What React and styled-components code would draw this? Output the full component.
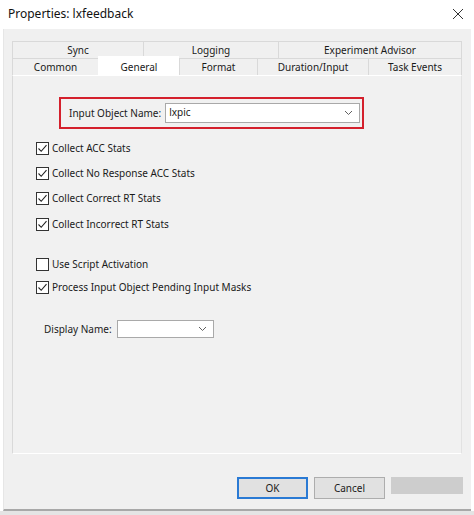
import React from 'react';
import styled, { createGlobalStyle } from 'styled-components';

const GlobalStyle = createGlobalStyle`
  html, body {
    margin: 0;
    padding: 0;
    background: #ffffff;
  }
  * {
    box-sizing: border-box;
  }
`;

const topTabs = ['Sync', 'Logging', 'Experiment Advisor'];
const topWidths = [131, 135, 184];
const bottomTabs = ['Common', 'General', 'Format', 'Duration/Input', 'Task Events'];
const bottomWidths = [86, 81, 78, 111, 94];

const checks = [
  { label: 'Collect ACC Stats', checked: true, gap: 12 },
  { label: 'Collect No Response ACC Stats', checked: true, gap: 11 },
  { label: 'Collect Correct RT Stats', checked: true, gap: 11 },
  { label: 'Collect Incorrect RT Stats', checked: true, gap: 12 },
  { label: 'Use Script Activation', checked: false, gap: 26 },
  { label: 'Process Input Object Pending Input Masks', checked: true, gap: 9 },
];

function Arrow() {
  return (
    <svg width="9" height="6" viewBox="0 0 9 6">
      <polyline points="1,1 4.5,4.5 8,1" fill="none" stroke="#606060" strokeWidth="1" />
    </svg>
  );
}

function CheckBox({ checked }) {
  return (
    <Box>
      {checked && (
        <svg width="11" height="11" viewBox="0 0 11 11">
          <polyline points="1.5,5.5 4.2,8.3 9.5,2.2" fill="none" stroke="#222" strokeWidth="1.1" />
        </svg>
      )}
    </Box>
  );
}

export default function App() {
  return (
    <Window>
      <GlobalStyle />
      <TitleBar>
        <Title>Properties: lxfeedback</Title>
        <Close>
          <svg width="12" height="12" viewBox="0 0 12 12">
            <path d="M1 1 L11 11 M11 1 L1 11" stroke="#333" strokeWidth="1" />
          </svg>
        </Close>
      </TitleBar>
      <Body>
        <Tabs>
          <TabRow>
            {topTabs.map((t, i) => (
              <Tab key={t} $w={topWidths[i]}>{t}</Tab>
            ))}
          </TabRow>
          <TabRow>
            {bottomTabs.map((t, i) => (
              <Tab key={t} $w={bottomWidths[i]} $active={t === 'General'}>{t}</Tab>
            ))}
          </TabRow>
        </Tabs>
        <Panel>
          <Highlight>
            <Label>Input Object Name:</Label>
            <Combo $grow $h={20}>
              <span>lxpic</span>
              <Arrow />
            </Combo>
          </Highlight>
          <CheckList>
            {checks.map((c) => (
              <CheckRow key={c.label} $gap={c.gap}>
                <CheckBox checked={c.checked} />
                <span>{c.label}</span>
              </CheckRow>
            ))}
          </CheckList>
          <DisplayRow>
            <Label>Display Name:</Label>
            <Combo $w={97} $h={18}>
              <span />
              <Arrow />
            </Combo>
          </DisplayRow>
        </Panel>
        <Buttons>
          <Button $focus>OK</Button>
          <Button>Cancel</Button>
          <Blur />
        </Buttons>
      </Body>
      <Footer />
    </Window>
  );
}

const Window = styled.div`
  width: 474px;
  height: 515px;
  display: flex;
  flex-direction: column;
  background: #ffffff;
  font-family: "Noto Sans", "Open Sans", sans-serif;
  color: #1a1a1a;
  overflow: hidden;
`;

const TitleBar = styled.div`
  height: 29px;
  flex-shrink: 0;
  display: flex;
  align-items: center;
  justify-content: space-between;
  padding: 0 10px 2px 8px;
`;

const Title = styled.div`
  font-size: 12px;
  color: #111;
`;

const Close = styled.div`
  display: flex;
  align-items: center;
`;

const Body = styled.div`
  flex: 1;
  margin: 0 3px;
  background: #f0f0f0;
  border-left: 1px solid #e6e6e6;
  border-bottom: 2px solid #a8a8a8;
  padding: 12px 0 0 8px;
  display: flex;
  flex-direction: column;
`;

const Tabs = styled.div`
  display: flex;
  flex-direction: column;
  width: 450px;
`;

const TabRow = styled.div`
  display: flex;
  height: 17px;
`;

const Tab = styled.div`
  width: ${(p) => p.$w}px;
  display: flex;
  align-items: center;
  justify-content: center;
  font-size: 10px;
  color: #1a1a1a;
  border: 1px solid #d9d9d9;
  border-right: none;
  border-bottom: none;
  background: ${(p) => (p.$active ? '#ffffff' : '#f0f0f0')};
  position: relative;
  ${(p) => p.$active && `
    margin-top: -2px;
    height: 20px;
    z-index: 1;
    border-color: #ffffff;
  `}
  &:last-child {
    border-right: 1px solid #d9d9d9;
  }
`;

const Panel = styled.div`
  width: 450px;
  height: 379px;
  border: 1px solid #d9d9d9;
  border-top-color: #ffffff;
  border-right-color: #e2e2e2;
  border-bottom-color: #ffffff;
  background: #f1f1f1;
  padding: 21px 0 0 23px;
  display: flex;
  flex-direction: column;
`;

const Highlight = styled.div`
  margin-left: 23px;
  width: 305px;
  height: 32px;
  flex-shrink: 0;
  border: 2px solid #d4202c;
  display: flex;
  align-items: center;
  padding: 0 2px 0 8px;
  gap: 4px;
`;

const Label = styled.span`
  font-size: 10px;
  color: #1a1a1a;
  white-space: nowrap;
`;

const Combo = styled.div`
  ${(p) => (p.$grow ? 'flex: 1; min-width: 0;' : `width: ${p.$w}px; flex-shrink: 0;`)}
  height: ${(p) => p.$h}px;
  background: #ffffff;
  border: 1px solid #a9a9a9;
  display: flex;
  align-items: center;
  justify-content: space-between;
  padding: 0 6px 0 3px;
  font-size: 10px;
  span {
    margin-top: -3px;
  }
`;

const CheckList = styled.div`
  display: flex;
  flex-direction: column;
`;

const CheckRow = styled.div`
  display: flex;
  align-items: center;
  gap: 3px;
  height: 14px;
  margin-top: ${(p) => p.$gap}px;
  font-size: 10px;
  color: #1a1a1a;
  white-space: nowrap;
`;

const Box = styled.div`
  width: 13px;
  height: 13px;
  flex-shrink: 0;
  border: 1px solid #333333;
  background: #ffffff;
  display: flex;
  align-items: center;
  justify-content: center;
`;

const DisplayRow = styled.div`
  display: flex;
  align-items: center;
  gap: 5px;
  margin-top: 26px;
  margin-left: 8px;
`;

const Buttons = styled.div`
  display: flex;
  gap: 6px;
  margin-top: 23px;
  padding-left: 225px;
`;

const Button = styled.div`
  width: 71px;
  height: 22px;
  display: flex;
  align-items: center;
  justify-content: center;
  font-size: 10px;
  color: #1a1a1a;
  background: #e1e1e1;
  border: 1px solid ${(p) => (p.$focus ? '#2a7ad4' : '#adadad')};
  ${(p) => p.$focus && 'box-shadow: inset 0 0 0 1px #2a7ad4;'}
`;

const Blur = styled.div`
  width: 72px;
  height: 17px;
  background: #cdcdcd;
`;

const Footer = styled.div`
  height: 4px;
  flex-shrink: 0;
  background: #e4e4e4;
`;
